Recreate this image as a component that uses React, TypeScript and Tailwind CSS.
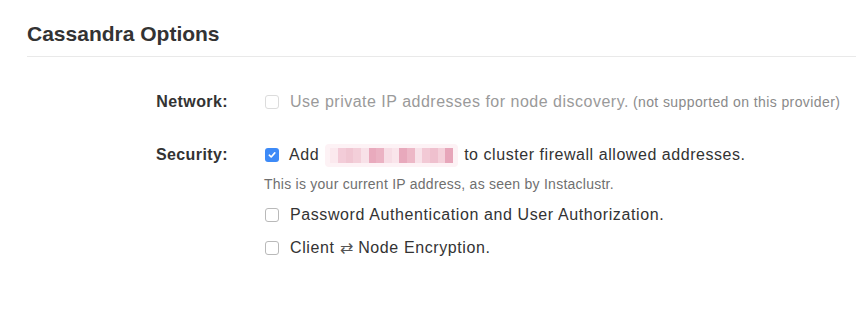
import React from "react";

const font = { fontFamily: '"Liberation Sans", Arial, Helvetica, sans-serif' };

function Box({ checked = false, disabled = false }: { checked?: boolean; disabled?: boolean }) {
  if (checked) {
    return (
      <span className="inline-flex h-[14px] w-[14px] shrink-0 items-center justify-center rounded-[3px] bg-[#3d8af7]">
        <svg width="10" height="10" viewBox="0 0 10 10">
          <path d="M2.3 5.2 L4.2 7 L7.8 2.9" fill="none" stroke="white" strokeWidth="1.6" strokeLinecap="round" strokeLinejoin="round" />
        </svg>
      </span>
    );
  }
  return (
    <span
      className={
        "inline-block h-[14px] w-[14px] shrink-0 rounded-[3px] border bg-white " +
        (disabled ? "border-[#dcdcdc]" : "border-[#b9b9b9]")
      }
    />
  );
}

const blocks = [
  "#fbe9ee", "#f3ccd8", "#f0c6d2", "#f3cfd9", "#f8e1e8", "#e9aabd", "#ebb2c3", "#f7dde5",
  "#fae5eb", "#e8a9bc", "#edb8c7", "#f8e2e9", "#f2c9d5", "#efc0ce", "#f4d0da", "#e7a6ba",
];

function Blurred() {
  return (
    <span className="mx-[6px] inline-flex h-[23px] w-[133px] items-center rounded-[4px] bg-[#fdf2f5] px-[5px]">
      <span className="flex h-[15px] w-full">
        {blocks.map((c, i) => (
          <span key={i} className="h-full flex-1" style={{ backgroundColor: c }} />
        ))}
      </span>
    </span>
  );
}

function Row({ label, children, className = "" }: { label?: string; children: React.ReactNode; className?: string }) {
  return (
    <div className={"flex items-center " + className}>
      <div className="w-[201px] shrink-0 text-right text-[16px] font-bold leading-[24px] tracking-[0.4px] text-[#333]">
        {label}
      </div>
      <div className="ml-[37px] flex items-center">{children}</div>
    </div>
  );
}

export default function App() {
  return (
    <div className="h-[330px] w-[856px] overflow-hidden bg-white pl-[27px] pt-[22px]" style={font}>
      <h2 className="text-[21px] font-bold leading-[24px] text-[#333]">Cassandra Options</h2>
      <div className="mt-[10px] h-px bg-[#e9e9e9]" />

      <Row label="Network:" className="mt-[33px]">
        <Box disabled />
        <span className="ml-[11px] text-[16px] leading-[24px] tracking-[0.5px] text-[#9a9a9a]">
          Use private IP addresses for node discovery.
        </span>
        <span className="ml-[4px] text-[14px] leading-[24px] tracking-[0.4px] text-[#8a8a8a]">
          (not supported on this provider)
        </span>
      </Row>

      <Row label="Security:" className="mt-[29px]">
        <Box checked />
        <span className="ml-[10px] text-[16px] leading-[24px] tracking-[0.55px] text-[#333]">Add</span>
        <Blurred />
        <span className="text-[16px] leading-[24px] tracking-[0.55px] text-[#333]">
          to cluster firewall allowed addresses.
        </span>
      </Row>

      <Row className="mt-[9px]">
        <span className="-ml-[1px] text-[14px] leading-[16px] tracking-[0.25px] text-[#6f6f6f]">
          This is your current IP address, as seen by Instaclustr.
        </span>
      </Row>

      <Row className="mt-[11px]">
        <Box />
        <span className="ml-[11px] text-[16px] leading-[24px] tracking-[0.6px] text-[#333]">
          Password Authentication and User Authorization.
        </span>
      </Row>

      <Row className="mt-[9px]">
        <Box />
        <span className="ml-[11px] text-[16px] leading-[24px] tracking-[0.6px] text-[#333]">
          Client <span className="text-[#555]">⇄</span> Node Encryption.
        </span>
      </Row>
    </div>
  );
}
